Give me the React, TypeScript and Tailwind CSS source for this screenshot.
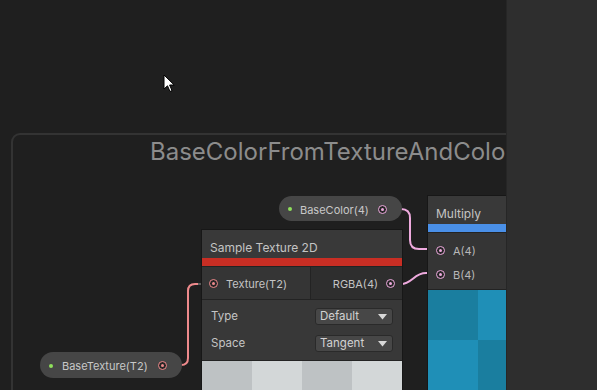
import React from "react";

function Port({ color }: { color: string }) {
  return (
    <div
      className="w-[9px] h-[9px] rounded-full border-[1.5px] flex items-center justify-center shrink-0 bg-[#262626]"
      style={{ borderColor: color }}
    >
      <div className="w-[3px] h-[3px] rounded-full" style={{ backgroundColor: color }} />
    </div>
  );
}

const PINK = "#eeaade";
const SALMON = "#ee8a8c";

function Dropdown({ label }: { label: string }) {
  return (
    <div className="w-[78px] h-[17px] rounded-[3px] bg-[#474747] border border-[#2a2a2a] flex items-center justify-between pl-[4px] pr-[5px]">
      <span className="text-[11.5px] text-[#d2d2d2] leading-none">{label}</span>
      <svg width="9" height="6" viewBox="0 0 9 6">
        <path d="M0 0 L9 0 L4.5 5.5 Z" fill="#d8d8d8" />
      </svg>
    </div>
  );
}

export default function App() {
  return (
    <div
      className="w-[597px] h-[390px] flex overflow-hidden bg-[#1f1f1f]"
      style={{ fontFamily: "Inter, 'Noto Sans', sans-serif" }}
    >
      <div className="relative w-[506px] h-full overflow-hidden shrink-0">
        {/* group frame */}
        <div className="absolute left-[11px] top-[133px] w-[560px] h-[300px] rounded-[9px] border-2 border-[#333333]" />
        <div className="absolute left-[150px] top-[137px] text-[24px] leading-[30px] text-[#8c8c8c] whitespace-nowrap">
          BaseColorFromTextureAndColor
        </div>

        {/* wires */}
        <svg className="absolute left-0 top-0" width="506" height="390" viewBox="0 0 506 390" fill="none">
          <path d="M181 365 Q188 365 188 358 L188 291 Q188 284 195 284 L198 284" stroke={SALMON} strokeWidth="2" />
          <path d="M198 284 L209 284" stroke="#5a5a5a" strokeWidth="2" />
          <path d="M401 209 Q410 209 410 218 L410 240 Q410 249 419 249 L428 249" stroke={PINK} strokeWidth="2" />
          <path d="M428 249 L437 249" stroke="#5e5e5e" strokeWidth="2" />
          <path d="M394 284 L401 284 C412 284 414 273 426 273 L428 273" stroke={PINK} strokeWidth="2" />
          <path d="M428 273 L437 273" stroke="#5e5e5e" strokeWidth="2" />
        </svg>

        {/* BaseColor pill */}
        <div className="absolute left-[279px] top-[196px] w-[123px] h-[25px] rounded-full bg-[#464646] flex items-center pl-[9px] pr-[15px] pt-[1px]">
          <div className="w-[4px] h-[4px] rounded-full bg-[#8fe05c]" />
          <span className="ml-[8px] text-[11px] text-[#c8c8c8] leading-none flex-1 pt-[2px]">BaseColor(4)</span>
          <Port color={PINK} />
        </div>

        {/* BaseTexture pill */}
        <div className="absolute left-[40px] top-[352px] w-[142px] h-[26px] rounded-full bg-[#464646] flex items-center pl-[9px] pr-[15px] pt-[1px]">
          <div className="w-[4px] h-[4px] rounded-full bg-[#8fe05c]" />
          <span className="ml-[9px] text-[11px] text-[#c8c8c8] leading-none flex-1 pt-[2px]">BaseTexture(T2)</span>
          <Port color={SALMON} />
        </div>

        {/* Sample Texture 2D node */}
        <div className="absolute left-[202px] top-[230px] w-[200px] flex flex-col ring-1 ring-[#171717]">
          <div className="h-[28px] bg-[#393939] flex items-center pl-[8px] pt-[8px] text-[12px] text-[#c4c4c4]">
            Sample Texture 2D
          </div>
          <div className="h-[8px] bg-[#c82e24]" />
          <div className="h-[33px] flex border-t border-[#232323]">
            <div className="w-[109px] bg-[#353535] border-r border-[#232323] flex items-center pl-[7px] pt-[1px]">
              <Port color={SALMON} />
              <span className="ml-[8px] text-[11px] text-[#c4c4c4] leading-none pt-[1px]">Texture(T2)</span>
            </div>
            <div className="flex-1 bg-[#2e2e2e] flex items-center justify-end pr-[7px] pt-[1px]">
              <span className="mr-[8px] text-[11px] text-[#c4c4c4] leading-none pt-[1px]">RGBA(4)</span>
              <Port color={PINK} />
            </div>
          </div>
          <div className="h-[61px] bg-[#383838] border-t border-[#232323] flex flex-col pt-[8px] gap-[10px] px-[9px]">
            <div className="h-[17px] flex items-center justify-between">
              <span className="text-[11.5px] text-[#c4c4c4]">Type</span>
              <Dropdown label="Default" />
            </div>
            <div className="h-[17px] flex items-center justify-between">
              <span className="text-[11.5px] text-[#c4c4c4]">Space</span>
              <Dropdown label="Tangent" />
            </div>
          </div>
          <div className="h-[40px] flex border-t border-[#232323]">
            <div className="w-[50px] bg-[#bec2c4]" />
            <div className="w-[50px] bg-[#d3d7d8]" />
            <div className="w-[50px] bg-[#bec2c4]" />
            <div className="w-[50px] bg-[#d3d7d8]" />
          </div>
        </div>

        {/* Multiply node */}
        <div className="absolute left-[428px] top-[196px] w-[160px] flex flex-col ring-1 ring-[#171717]">
          <div className="h-[28px] bg-[#393939] flex items-center pl-[8px] pt-[8px] text-[12px] text-[#c4c4c4]">
            Multiply
          </div>
          <div className="h-[8px] bg-[#4a90e8]" />
          <div className="h-[58px] bg-[#353535] border-t border-[#232323] border-b flex flex-col pt-[5px] pl-[8px]">
            <div className="h-[24px] flex items-center">
              <Port color={PINK} />
              <span className="ml-[8px] text-[11px] text-[#b8b8b8] leading-none pt-[2px]">A(4)</span>
            </div>
            <div className="h-[24px] flex items-center">
              <Port color={PINK} />
              <span className="ml-[8px] text-[11px] text-[#b8b8b8] leading-none pt-[2px]">B(4)</span>
            </div>
          </div>
          <div className="flex">
            <div className="w-[50px] h-[50px] bg-[#1a7e9f]" />
            <div className="w-[50px] h-[50px] bg-[#1f8fb7]" />
            <div className="w-[50px] h-[50px] bg-[#1a7e9f]" />
          </div>
          <div className="flex">
            <div className="w-[50px] h-[50px] bg-[#1f8fb7]" />
            <div className="w-[50px] h-[50px] bg-[#1a7e9f]" />
            <div className="w-[50px] h-[50px] bg-[#1f8fb7]" />
          </div>
        </div>

        {/* cursor */}
        <svg className="absolute left-[163px] top-[74px]" width="13" height="20" viewBox="0 0 13 20">
          <path
            d="M1 1 L1 15 L4.5 11.8 L7 17.5 L9 16.6 L6.6 11 L11.2 11 Z"
            fill="#ffffff"
            stroke="#000000"
            strokeWidth="1"
            strokeLinejoin="miter"
          />
        </svg>
      </div>
      <div className="flex-1 h-full bg-[#2e2e2e] border-l border-[#262626]" />
    </div>
  );
}
